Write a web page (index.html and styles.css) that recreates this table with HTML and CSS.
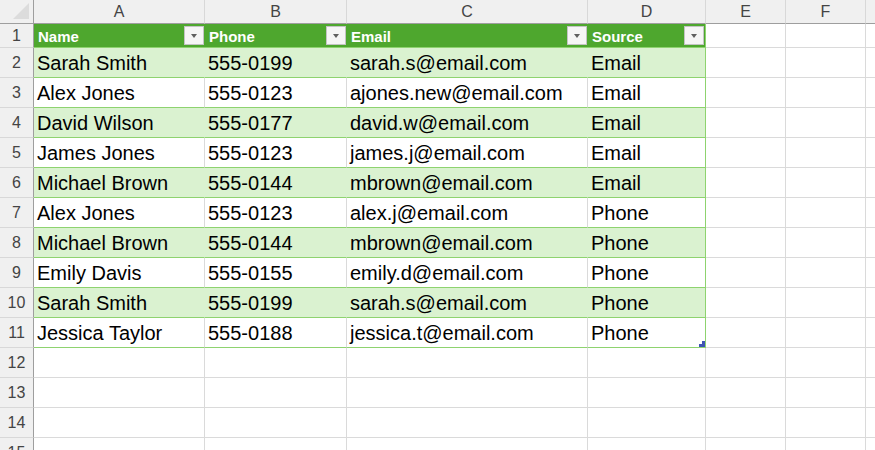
FILE: index.html
```html
<!DOCTYPE html>
<html>
<head>
<meta charset="utf-8">
<link rel="stylesheet" href="styles.css">
</head>
<body>
<div class="sheet">
  <div class="corner"><span class="tri"></span></div>
  <div class="colhead">A</div><div class="colhead">B</div><div class="colhead">C</div><div class="colhead">D</div><div class="colhead">E</div><div class="colhead">F</div><div class="colhead last"></div>

  <div class="rowhead">1</div>
  <div class="th">Name<span class="filter"></span></div>
  <div class="th">Phone<span class="filter"></span></div>
  <div class="th">Email<span class="filter"></span></div>
  <div class="th tlast">Source<span class="filter"></span></div>
  <div class="cell"></div><div class="cell"></div><div class="cell last"></div>

  <div class="rowhead">2</div>
  <div class="td band">Sarah Smith</div><div class="td band">555-0199</div><div class="td band">sarah.s@email.com</div><div class="td band tlast">Email</div>
  <div class="cell"></div><div class="cell"></div><div class="cell last"></div>

  <div class="rowhead">3</div>
  <div class="td">Alex Jones</div><div class="td">555-0123</div><div class="td">ajones.new@email.com</div><div class="td tlast">Email</div>
  <div class="cell"></div><div class="cell"></div><div class="cell last"></div>

  <div class="rowhead">4</div>
  <div class="td band">David Wilson</div><div class="td band">555-0177</div><div class="td band">david.w@email.com</div><div class="td band tlast">Email</div>
  <div class="cell"></div><div class="cell"></div><div class="cell last"></div>

  <div class="rowhead">5</div>
  <div class="td">James Jones</div><div class="td">555-0123</div><div class="td">james.j@email.com</div><div class="td tlast">Email</div>
  <div class="cell"></div><div class="cell"></div><div class="cell last"></div>

  <div class="rowhead">6</div>
  <div class="td band">Michael Brown</div><div class="td band">555-0144</div><div class="td band">mbrown@email.com</div><div class="td band tlast">Email</div>
  <div class="cell"></div><div class="cell"></div><div class="cell last"></div>

  <div class="rowhead">7</div>
  <div class="td">Alex Jones</div><div class="td">555-0123</div><div class="td">alex.j@email.com</div><div class="td tlast">Phone</div>
  <div class="cell"></div><div class="cell"></div><div class="cell last"></div>

  <div class="rowhead">8</div>
  <div class="td band">Michael Brown</div><div class="td band">555-0144</div><div class="td band">mbrown@email.com</div><div class="td band tlast">Phone</div>
  <div class="cell"></div><div class="cell"></div><div class="cell last"></div>

  <div class="rowhead">9</div>
  <div class="td">Emily Davis</div><div class="td">555-0155</div><div class="td">emily.d@email.com</div><div class="td tlast">Phone</div>
  <div class="cell"></div><div class="cell"></div><div class="cell last"></div>

  <div class="rowhead">10</div>
  <div class="td band">Sarah Smith</div><div class="td band">555-0199</div><div class="td band">sarah.s@email.com</div><div class="td band tlast">Phone</div>
  <div class="cell"></div><div class="cell"></div><div class="cell last"></div>

  <div class="rowhead">11</div>
  <div class="td">Jessica Taylor</div><div class="td">555-0188</div><div class="td">jessica.t@email.com</div><div class="td tlast handle-cell">Phone<span class="handle"></span></div>
  <div class="cell"></div><div class="cell"></div><div class="cell last"></div>

  <div class="rowhead">12</div>
  <div class="cell"></div><div class="cell"></div><div class="cell"></div><div class="cell"></div><div class="cell"></div><div class="cell"></div><div class="cell last"></div>
  <div class="rowhead">13</div>
  <div class="cell"></div><div class="cell"></div><div class="cell"></div><div class="cell"></div><div class="cell"></div><div class="cell"></div><div class="cell last"></div>
  <div class="rowhead">14</div>
  <div class="cell"></div><div class="cell"></div><div class="cell"></div><div class="cell"></div><div class="cell"></div><div class="cell"></div><div class="cell last"></div>
  <div class="rowhead">15</div>
  <div class="cell"></div><div class="cell"></div><div class="cell"></div><div class="cell"></div><div class="cell"></div><div class="cell"></div><div class="cell last"></div>
</div>
</body>
</html>
```

FILE: styles.css
```css
html, body {
  margin: 0;
  padding: 0;
  background: #ffffff;
  overflow: hidden;
}
.sheet {
  display: grid;
  grid-template-columns: 34px 171px 142px 241px 118px 80px 80px 40px;
  grid-template-rows: 24px 24px repeat(14, 30px);
  font-family: "Liberation Sans", Arial, sans-serif;
  width: 910px;
}
.sheet > div {
  box-sizing: border-box;
  overflow: hidden;
  white-space: nowrap;
}
.corner {
  background: #f0f0f0;
  border-right: 1px solid #9e9e9e;
  border-bottom: 1px solid #9e9e9e;
  position: relative;
}
.tri {
  position: absolute;
  right: 4px;
  bottom: 4px;
  width: 0;
  height: 0;
  border-left: 16px solid transparent;
  border-bottom: 16px solid #dcdcdc;
}
.colhead {
  background: #f0f0f0;
  border-right: 1px solid #d8d8d8;
  border-bottom: 1px solid #9e9e9e;
  color: #444444;
  font-size: 16px;
  display: flex;
  align-items: center;
  justify-content: center;
}
.colhead.last { border-right: none; }
.rowhead {
  background: #f0f0f0;
  border-right: 1px solid #9e9e9e;
  border-bottom: 1px solid #d8d8d8;
  color: #444444;
  font-size: 16px;
  display: flex;
  align-items: center;
  justify-content: center;
}
.cell {
  border-right: 1px solid #dadada;
  border-bottom: 1px solid #dadada;
}
.cell.last { border-right: none; }
.th {
  background: #4ea72e;
  color: #ffffff;
  font-weight: bold;
  font-size: 15px;
  display: flex;
  align-items: center;
  padding-left: 4px;
  padding-top: 1px;
  position: relative;
  border-bottom: 1px solid #8ed36f;
}
.th.tlast { border-right: 1px solid #8ed36f; }
.filter {
  position: absolute;
  right: 1px;
  top: 2px;
  width: 20px;
  height: 19px;
  box-sizing: border-box;
  background: #f6f6f6;
  border: 1px solid #c4c4c4;
}
.filter::after {
  content: "";
  position: absolute;
  left: 6px;
  top: 7px;
  border-left: 3.5px solid transparent;
  border-right: 3.5px solid transparent;
  border-top: 4px solid #606060;
}
.td {
  color: #000000;
  font-size: 20px;
  display: flex;
  align-items: center;
  padding-left: 3px;
  padding-top: 2px;
  border-right: 1px solid #dadada;
  border-bottom: 1px solid #8ed36f;
}
.td.band {
  background: #daf2d0;
  border-right-color: #daf2d0;
}
.td.tlast { border-right: 1px solid #8ed36f; }
.handle-cell { position: relative; }
.handle {
  position: absolute;
  right: 0;
  bottom: 0;
  width: 6px;
  height: 6px;
  background: #4054b4;
  clip-path: polygon(50% 0, 100% 0, 100% 100%, 0 100%, 0 50%, 50% 50%);
}
```
